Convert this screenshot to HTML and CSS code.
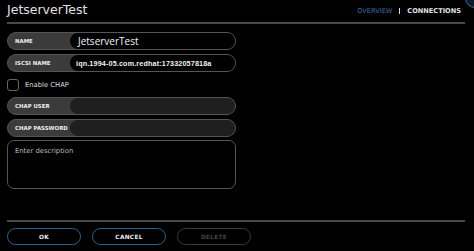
FILE: index.html
```html
<!DOCTYPE html>
<html>
<head>
<meta charset="utf-8">
<link rel="stylesheet" href="styles.css">
</head>
<body>
<div class="panel">
  <div class="header">
    <h1 class="title">JetserverTest</h1>
    <nav class="tabs">
      <span class="tab active">OVERVIEW</span>
      <span class="sep"></span>
      <span class="tab">CONNECTIONS</span>
    </nav>
    <span class="corner-dot"></span>
  </div>
  <div class="form">
    <div class="field">
      <span class="label">NAME</span>
      <span class="value big">JetserverTest</span>
    </div>
    <div class="field">
      <span class="label">ISCSI NAME</span>
      <span class="value mono">iqn.1994-05.com.redhat:17332057818a</span>
    </div>
    <label class="check">
      <span class="box"></span>
      <span class="check-text">Enable CHAP</span>
    </label>
    <div class="field disabled">
      <span class="label">CHAP USER</span>
      <span class="value"></span>
    </div>
    <div class="field disabled">
      <span class="label">CHAP PASSWORD</span>
      <span class="value"></span>
    </div>
    <div class="desc">Enter description</div>
  </div>
  <div class="footer">
    <button class="btn">OK</button>
    <button class="btn">CANCEL</button>
    <button class="btn off">DELETE</button>
  </div>
</div>
</body>
</html>
```
FILE: styles.css
```css
* { box-sizing: border-box; }
html, body { margin: 0; padding: 0; background: #000; }
body {
  width: 474px; height: 251px; overflow: hidden;
  font-family: "DejaVu Sans", "Liberation Sans", sans-serif;
  color: #e8e8e8;
}
.panel { padding: 0 9px 0 7px; display: flex; flex-direction: column; height: 251px; }
.header {
  position: relative;
  display: flex; align-items: flex-end; justify-content: space-between;
  height: 24px; border-bottom: 2px solid #4a4a4a;
  padding-bottom: 4px;
}
.title {
  margin: 0; font-weight: normal; font-size: 12.5px; color: #e2e2e2;
  line-height: 16px;
}
.tabs { display: flex; align-items: center; gap: 6px; padding-bottom: 3px; padding-right: 4px; }
.tab { font-size: 6.6px; font-weight: bold; color: #e0e0e0; }
.tab.active { color: #3d6fa8; font-weight: normal; }
.sep { width: 1px; height: 6px; background: #ddd; margin: 0 1px; }
.corner-dot {
  position: absolute; right: -20px; top: -12px;
  width: 20px; height: 20px; border-radius: 50%;
  background: #0b1a2b; border: 1.5px solid #3f6e9c;
}
.form { padding-top: 8px; width: 229px; display: flex; flex-direction: column; }
.field {
  display: flex; height: 18px; border: 1.5px solid #555; border-radius: 9px;
  background: #3b3b3b; overflow: hidden; margin-bottom: 4px;
}
.label {
  width: 62px; flex: none; font-size: 5.4px; font-weight: bold; color: #eee;
  display: flex; align-items: center; padding-left: 7px;
  white-space: nowrap;
}
.value {
  flex: 1; background: #000; border-radius: 8px 0 0 8px;
  display: flex; align-items: center; padding-left: 6px; color: #f2f2f2;
  white-space: nowrap; overflow: hidden;
}
.value.big { font-size: 10px; padding-left: 8px; font-family: "Open Sans", "DejaVu Sans", sans-serif; }
.value.mono { font-size: 7.2px; font-weight: bold; font-family: "Liberation Sans", sans-serif; letter-spacing: 0.15px; }
.field.disabled .value { background: #1f1f1f; }
.check { display: flex; align-items: center; gap: 6px; margin: 3px 0 6px; }
.box { width: 12px; height: 12px; border: 1.5px solid #666; border-radius: 3px; }
.check-text { font-size: 6.8px; color: #ddd; }
.desc {
  margin-top: -1px;
  height: 49px; border: 1.5px solid #555; border-radius: 7px;
  font-size: 6.8px; color: #bbb; padding: 6px 7px;
}
.footer {
  margin-top: auto; border-top: 2px solid #4a4a4a;
  display: flex; gap: 11px; padding: 6px 0 5px;
  margin-bottom: 1px;
}
.btn {
  width: 74px; height: 17px; border-radius: 9px; background: #000;
  border: 1.5px solid #2e6190; color: #f0f0f0; font-family: inherit;
  font-size: 5.8px; font-weight: bold; letter-spacing: 0.3px; padding: 0;
}
.btn.off { border-color: #3a3a3a; color: #444; }
```
